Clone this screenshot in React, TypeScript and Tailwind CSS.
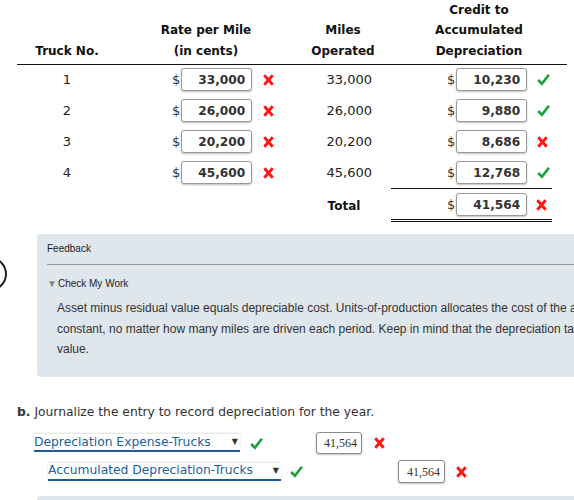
import React from 'react'

const verdana = { fontFamily: '"DejaVu Sans", Verdana, sans-serif' }

const rows = [
  { no: '1', rate: '33,000', rateOk: false, miles: '33,000', credit: '10,230', creditOk: true },
  { no: '2', rate: '26,000', rateOk: false, miles: '26,000', credit: '9,880', creditOk: true },
  { no: '3', rate: '20,200', rateOk: false, miles: '20,200', credit: '8,686', creditOk: false },
  { no: '4', rate: '45,600', rateOk: false, miles: '45,600', credit: '12,768', creditOk: true },
]

const Cross = () => (
  <svg width="11" height="12" viewBox="0 0 11 12" className="shrink-0">
    <path d="M1.3 1.2 L9.7 10.8 M9.7 1.2 L1.3 10.8" stroke="#ff1414" strokeWidth="2.9" strokeLinecap="butt" />
  </svg>
)

const Check = () => (
  <svg width="13" height="13" viewBox="0 0 13 13" className="shrink-0">
    <path d="M1.2 7 L4.9 10.8 L11.9 1.8" stroke="#17a135" strokeWidth="2.6" fill="none" strokeLinejoin="miter" />
  </svg>
)

const Mark = ({ ok }: { ok: boolean }) => (ok ? <Check /> : <Cross />)

const AmountBox = ({ value }: { value: string }) => (
  <div className="w-[71px] h-[23px] border border-[#9a9a9a] rounded-[3px] bg-white shadow-[0_1px_2px_rgba(0,0,0,0.25)] flex items-center justify-end pr-[6px] text-[12.2px] font-bold text-[#333]">
    {value}
  </div>
)

const Dollar = () => <span className="text-[13px] text-[#333] mr-[1px]">$</span>

export default function App() {
  return (
    <div className="relative w-[574px] h-[500px] overflow-hidden bg-white text-[#222]" style={verdana}>
      {/* table */}
      <div className="ml-[17px] w-[550px]">
        <div className="flex items-end border-b border-[#111] h-[65px] pb-[3px] text-[12px] font-bold leading-[20.5px] text-[#111]">
          <div className="w-[100px] text-center">Truck No.</div>
          <div className="w-[178px] text-center">
            Rate per Mile
            <br />
            (in cents)
          </div>
          <div className="w-[96px] text-center">
            Miles
            <br />
            Operated
          </div>
          <div className="w-[176px] text-center">
            Credit to
            <br />
            Accumulated
            <br />
            Depreciation
          </div>
        </div>

        {rows.map((r, i) => (
          <div
            key={r.no}
            className={`flex items-center text-[13px] leading-[16px] text-[#222] pt-[3px] ${i === 3 ? 'pb-[4px]' : 'pb-[5px]'}`}
          >
            <div className="w-[100px] text-center">{r.no}</div>
            <div className="w-[178px] flex items-center pl-[55px]">
              <Dollar />
              <AmountBox value={r.rate} />
              <span className="ml-[11px]">
                <Mark ok={r.rateOk} />
              </span>
            </div>
            <div className="w-[96px] text-right pr-[19px]">{r.miles}</div>
            <div className="w-[176px] flex items-center pl-[56px]">
              <Dollar />
              <AmountBox value={r.credit} />
              <span className="ml-[10px]">
                <Mark ok={r.creditOk} />
              </span>
            </div>
          </div>
        ))}

        <div className="flex items-center text-[13px] leading-[16px]">
          <div className="w-[278px]" />
          <div className="w-[96px] text-center text-[12px] font-bold text-[#111] pt-[1px] pl-[2px]">Total</div>
          <div className="w-[161px] border-t border-b-[3px] border-b-[#111] border-double border-t-[#111] pt-[4px] pb-[3px] flex items-center pl-[56px]">
            <Dollar />
            <AmountBox value="41,564" />
            <span className="ml-[9px]">
              <Cross />
            </span>
          </div>
        </div>
      </div>

      {/* left circle fragment */}
      <div className="absolute left-[-27px] top-[257px] w-[34px] h-[34px] rounded-full border-2 border-[#222]" />

      {/* feedback */}
      <div
        className="mt-[12px] ml-[37px] w-[620px] h-[143px] bg-[#dfe6ec] rounded-[4px] pl-[10px] pt-[9px] text-[#222]"
        style={{ fontFamily: '"Liberation Sans", Arial, sans-serif' }}
      >
        <div className="text-[10px] leading-[12px]">Feedback</div>
        <div className="border-t border-[#999] mt-[9px]" />
        <div className="flex items-center mt-[13px] text-[10px] leading-[12px]">
          <span className="text-[#888] text-[10px] mr-[1px]">▼</span>
          Check My Work
        </div>
        <div className="pl-[10px] mt-[8px] text-[12px] leading-[20.5px] text-[#333] whitespace-nowrap">
          <div>Asset minus residual value equals depreciable cost. Units-of-production allocates the cost of the asset over the miles driven, so the rate per mile is</div>
          <div>constant, no matter how many miles are driven each period. Keep in mind that the depreciation taken cannot reduce book value below residual</div>
          <div>value.</div>
        </div>
      </div>

      {/* part b */}
      <div className="ml-[17px] mt-[27px] text-[12.3px] text-[#333] leading-[16px]">
        <span className="font-bold">b.</span> Journalize the entry to record depreciation for the year.
      </div>

      <div className="flex items-center mt-[12px] ml-[34px]">
        <div className="w-[206px] h-[18px] bg-white border-b-2 border-[#1d5c96] shadow-[0_-1px_2px_rgba(0,0,0,0.12)] flex items-center justify-between pr-[2px] text-[12.3px] text-[#1d5fa3]">
          <span>Depreciation Expense-Trucks</span>
          <span className="text-[8px] text-[#333]">▼</span>
        </div>
        <span className="ml-[10px]">
          <Check />
        </span>
        <div
          className="ml-[53px] w-[46px] h-[22px] border border-[#8a8a8a] rounded-[3px] bg-white shadow-[0_1px_2px_rgba(0,0,0,0.25)] flex items-center justify-end pr-[4px] text-[12px] text-[#333]"
          style={{ fontFamily: '"Liberation Serif", "Times New Roman", serif' }}
        >
          41,564
        </div>
        <span className="ml-[12px]">
          <Cross />
        </span>
      </div>

      <div className="flex items-center mt-[6px] ml-[48px]">
        <div className="w-[233px] h-[18px] bg-white border-b-2 border-[#1d5c96] shadow-[0_-1px_2px_rgba(0,0,0,0.12)] flex items-center justify-between pr-[2px] text-[12.3px] text-[#1d5fa3]">
          <span>Accumulated Depreciation-Trucks</span>
          <span className="text-[8px] text-[#333]">▼</span>
        </div>
        <span className="ml-[9px]">
          <Check />
        </span>
        <div
          className="ml-[95px] w-[47px] h-[23px] border border-[#8a8a8a] rounded-[3px] bg-white shadow-[0_1px_2px_rgba(0,0,0,0.25)] flex items-center justify-end pr-[4px] text-[12px] text-[#333]"
          style={{ fontFamily: '"Liberation Serif", "Times New Roman", serif' }}
        >
          41,564
        </div>
        <span className="ml-[11px]">
          <Cross />
        </span>
      </div>

      <div className="mt-[13px] ml-[37px] w-[600px] h-[40px] bg-[#dfe6ec] rounded-[4px]" />
    </div>
  )
}
